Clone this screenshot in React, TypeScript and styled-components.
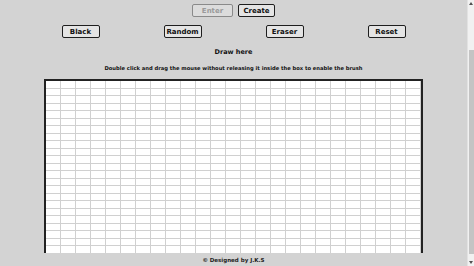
import React from "react";
import styled, { createGlobalStyle } from "styled-components";

const Global = createGlobalStyle`
  html, body { margin: 0; padding: 0; background: #d3d3d3; overflow: hidden; }
  body { font-family: "DejaVu Sans", "Liberation Sans", sans-serif; }
`;

const Shell = styled.div`
  display: flex;
  height: 266px;
  width: 474px;
  overflow: hidden;
`;

const Page = styled.div`
  flex: 1;
  display: flex;
  flex-direction: column;
  align-items: center;
  min-width: 0;
`;

const TopRow = styled.div`
  display: flex;
  gap: 5px;
  margin-top: 4px;
  height: 13px;
`;

const ToolRow = styled.div`
  display: flex;
  justify-content: center;
  gap: 64px;
  margin-top: 8px;
  width: 100%;
`;

const Btn = styled.button<{ $w: number }>`
  width: ${(p) => p.$w}px;
  height: 13px;
  padding: 0;
  box-sizing: border-box;
  border: 1.5px solid ${(p) => (p.disabled ? "#8a8a8a" : "#1e1e1e")};
  border-radius: 2px;
  background: ${(p) => (p.disabled ? "#dcdcdc" : "#e4e4e4")};
  color: ${(p) => (p.disabled ? "#9a9a9a" : "#111")};
  font-family: "DejaVu Sans", sans-serif;
  font-weight: bold;
  font-size: 7px;
  line-height: 10px;
  display: flex;
  align-items: center;
  justify-content: center;
`;

const Title = styled.div`
  margin-top: 9px;
  font-size: 6.5px;
  font-weight: bold;
  color: #111;
  line-height: 10px;
`;

const Hint = styled.div`
  margin-top: 7px;
  font-size: 5.2px;
  font-weight: bold;
  color: #111;
  line-height: 8px;
`;

const BoardArea = styled.div`
  flex: 1;
  min-height: 0;
  overflow: hidden;
  margin-top: 7px;
  display: flex;
  justify-content: center;
  width: 100%;
`;

const Board = styled.div`
  display: grid;
  grid-template-columns: repeat(25, 15px);
  grid-auto-rows: 7.5px;
  border: 2px solid #222;
  border-bottom: none;
  background: #fff;
  align-self: flex-start;
`;

const Cell = styled.div`
  box-sizing: border-box;
  border-right: 1px solid #d0d0d0;
  border-bottom: 1px solid #d0d0d0;
`;

const Footer = styled.div`
  height: 13px;
  width: 100%;
  display: flex;
  align-items: center;
  justify-content: center;
  font-size: 5.5px;
  font-weight: bold;
  color: #222;
  background: #d3d3d3;
`;

const ScrollBar = styled.div`
  width: 7px;
  display: flex;
  flex-direction: column;
  background: #f1f1f1;
  border-left: 1px solid #e2e2e2;
  box-sizing: border-box;
`;

const Arrow = styled.div`
  height: 7px;
  display: flex;
  align-items: center;
  justify-content: center;
`;

const Track = styled.div`
  flex: 1;
  display: flex;
  flex-direction: column;
  padding-top: 43px;
  padding-bottom: 5px;
`;

const Thumb = styled.div`
  flex: 1;
  background: #c4c4c4;
  margin: 0 0.5px;
`;

const cells = Array.from({ length: 25 * 25 });

export default function App() {
  return (
    <>
      <Global />
      <Shell>
        <Page>
          <TopRow>
            <Btn $w={41} disabled>
              Enter
            </Btn>
            <Btn $w={37}>Create</Btn>
          </TopRow>
          <ToolRow>
            <Btn $w={38}>Black</Btn>
            <Btn $w={38}>Random</Btn>
            <Btn $w={38}>Eraser</Btn>
            <Btn $w={38}>Reset</Btn>
          </ToolRow>
          <Title>Draw here</Title>
          <Hint>
            Double click and drag the mouse without releasing it inside the box to enable the brush
          </Hint>
          <BoardArea>
            <Board>
              {cells.map((_, i) => (
                <Cell key={i} />
              ))}
            </Board>
          </BoardArea>
          <Footer>© Designed by J.K.S</Footer>
        </Page>
        <ScrollBar>
          <Arrow>
            <svg width="4" height="3" viewBox="0 0 4 3">
              <path d="M0 3 L2 0 L4 3 Z" fill="#505050" />
            </svg>
          </Arrow>
          <Track>
            <Thumb />
          </Track>
          <Arrow>
            <svg width="4" height="3" viewBox="0 0 4 3">
              <path d="M0 0 L2 3 L4 0 Z" fill="#505050" />
            </svg>
          </Arrow>
        </ScrollBar>
      </Shell>
    </>
  );
}
